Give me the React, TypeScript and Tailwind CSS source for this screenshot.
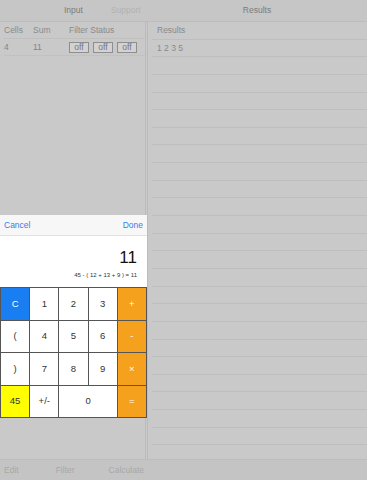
import React from 'react';

const keys: { label: string; cls: string; span?: boolean }[] = [
  { label: 'C', cls: 'bg-[#1a7ef3] text-white' },
  { label: '1', cls: 'bg-white text-[#333]' },
  { label: '2', cls: 'bg-white text-[#333]' },
  { label: '3', cls: 'bg-white text-[#333]' },
  { label: '+', cls: 'bg-[#f5a11d] text-white' },
  { label: '(', cls: 'bg-white text-[#333]' },
  { label: '4', cls: 'bg-white text-[#333]' },
  { label: '5', cls: 'bg-white text-[#333]' },
  { label: '6', cls: 'bg-white text-[#333]' },
  { label: '-', cls: 'bg-[#f5a11d] text-white' },
  { label: ')', cls: 'bg-white text-[#333]' },
  { label: '7', cls: 'bg-white text-[#333]' },
  { label: '8', cls: 'bg-white text-[#333]' },
  { label: '9', cls: 'bg-white text-[#333]' },
  { label: '×', cls: 'bg-[#f5a11d] text-white' },
  { label: '45', cls: 'bg-[#ffff00] text-[#333]' },
  { label: '+/-', cls: 'bg-white text-[#333]' },
  { label: '0', cls: 'bg-white text-[#333]', span: true },
  { label: '=', cls: 'bg-[#f5a11d] text-white' },
];

export default function App() {
  const resultRows = Array.from({ length: 25 });

  return (
    <div
      className="relative w-[367px] h-[480px] overflow-hidden bg-[#c9c9c9] flex flex-col"
      style={{ fontFamily: '"Liberation Sans", Arial, sans-serif' }}
    >
      {/* Top bar */}
      <div className="h-[22px] flex border-b border-[#bdbdbd] bg-[#c6c6c6] shrink-0">
        <div className="w-[147px] flex items-center text-[8.5px] whitespace-nowrap">
          <span className="ml-[64px] text-[#7c7c7c]">Input</span>
          <span className="ml-[28px] text-[#b2b2b2]">Support</span>
        </div>
        <div className="flex-1 flex items-center justify-center text-[8.5px] text-[#7c7c7c]">Results</div>
      </div>

      {/* Main */}
      <div className="flex-1 flex min-h-0">
        {/* Left pane */}
        <div className="w-[145px] flex flex-col pl-[4px]">
          <div className="h-[17px] flex items-center text-[8.5px] text-[#8a8a8a] border-b border-[#c0c0c0]">
            <span className="w-[29px]">Cells</span>
            <span className="w-[36px]">Sum</span>
            <span>Filter Status</span>
          </div>
          <div className="h-[17px] flex items-center text-[8.5px] text-[#858585] border-b border-[#c1c1c1]">
            <span className="w-[29px]">4</span>
            <span className="w-[36px]">11</span>
            <div className="flex gap-[4px]">
              {['off', 'off', 'off'].map((o, i) => (
                <span
                  key={i}
                  className="w-[20px] h-[11px] flex items-center justify-center border border-[#8e8e8e] bg-[#d2d2d2] text-[#777] leading-none"
                >
                  {o}
                </span>
              ))}
            </div>
          </div>
        </div>
        <div className="w-[3px] border-l border-r border-[#bcbcbc]" />

        {/* Right pane */}
        <div className="flex-1 flex flex-col pl-[4px]">
          <div className="h-[17.65px] shrink-0 flex items-center text-[8.5px] text-[#8a8a8a] border-b border-[#bebebe] pl-[5px]">
            Results
          </div>
          <div className="h-[17.65px] shrink-0 flex items-center text-[8.5px] text-[#8a8a8a] border-b border-[#bebebe] pl-[5px]">
            1 2 3 5
          </div>
          {resultRows.map((_, i) => (
            <div key={i} className="h-[17.65px] shrink-0 border-b border-[#bebebe]" />
          ))}
        </div>
      </div>

      {/* Bottom toolbar */}
      <div className="h-[21px] shrink-0 flex items-center bg-[#c4c4c4] border-t border-[#bdbdbd] text-[8.5px] text-[#a8a8a8] whitespace-nowrap">
        <span className="ml-[4px]">Edit</span>
        <span className="ml-[37px]">Filter</span>
        <span className="ml-[34px]">Calculate</span>
      </div>

      {/* Calculator popover */}
      <div className="absolute left-0 top-[215px] w-[147px] flex flex-col bg-white">
        <div className="h-[21px] flex items-center justify-between px-[4px] bg-[#f7f7f7] border-b border-[#e2e2e2] text-[8.5px] text-[#2f80f0]">
          <span>Cancel</span>
          <span>Done</span>
        </div>
        <div className="h-[51px] flex flex-col items-end pr-[10px] bg-white">
          <span className="mt-[13px] text-[17px] leading-none text-[#111]">11</span>
          <span className="mt-[6px] text-[6px] leading-none text-[#333]">45 - ( 12 + 13 + 9 ) = 11</span>
        </div>
        <div className="grid grid-cols-5 border-t border-l border-[#555] bg-[#555]">
          {keys.map((k, i) => (
            <div
              key={i}
              className={`h-[32.5px] flex items-center justify-center text-[9.5px] border-r border-b border-[#555] ${k.cls} ${k.span ? 'col-span-2' : ''}`}
            >
              {k.label}
            </div>
          ))}
        </div>
      </div>
    </div>
  );
}
